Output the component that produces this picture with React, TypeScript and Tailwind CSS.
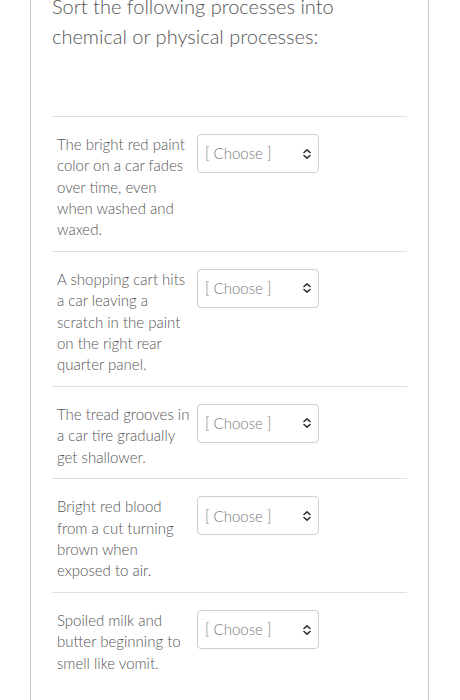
// App.tsx
const items = [
  "The bright red paint color on a car fades over time, even when washed and waxed.",
  "A shopping cart hits a car leaving a scratch in the paint on the right rear quarter panel.",
  "The tread grooves in a car tire gradually get shallower.",
  "Bright red blood from a cut turning brown when exposed to air.",
  "Spoiled milk and butter beginning to smell like vomit.",
];

function Chevrons() {
  return (
    <svg width="10" height="12" viewBox="0 0 10 12" fill="none">
      <path
        d="M2 4.5L5 1.8L8 4.5M2 7.5L5 10.2L8 7.5"
        stroke="#333"
        strokeWidth="1.6"
        strokeLinecap="round"
        strokeLinejoin="round"
      />
    </svg>
  );
}

function ChooseSelect() {
  return (
    <div className="flex h-[39px] w-[122px] shrink-0 items-center justify-between rounded-[4px] border border-[#cfcfcf] bg-white pl-[7px] pr-[6px] text-[15px] font-light text-[#7a7a7a]">
      <span>[ Choose ]</span>
      <Chevrons />
    </div>
  );
}

export default function App() {
  return (
    <div className="h-[700px] overflow-hidden bg-white font-['Lato','Open_Sans',sans-serif]">
      <div className="ml-[30px] flow-root h-full w-[399px] border-x border-[#c8c8c8] px-[21px]">
        <h1 className="mt-[-9px] text-[20px] leading-[30px] font-light text-[#555]">
          Sort the following processes into chemical or physical processes:
        </h1>
        <div className="mt-[65px] border-t border-[#dedede]">
          {items.map((text, i) => (
            <div
              key={i}
              className="flex items-start gap-[4px] border-b border-[#dedede] pt-[17px] pb-[10.5px] pl-[5px] last:border-b-0"
            >
              <p className="w-[136px] shrink-0 text-[15px] leading-[21.3px] font-light text-[#555]">
                {text}
              </p>
              <ChooseSelect />
            </div>
          ))}
        </div>
      </div>
    </div>
  );
}
